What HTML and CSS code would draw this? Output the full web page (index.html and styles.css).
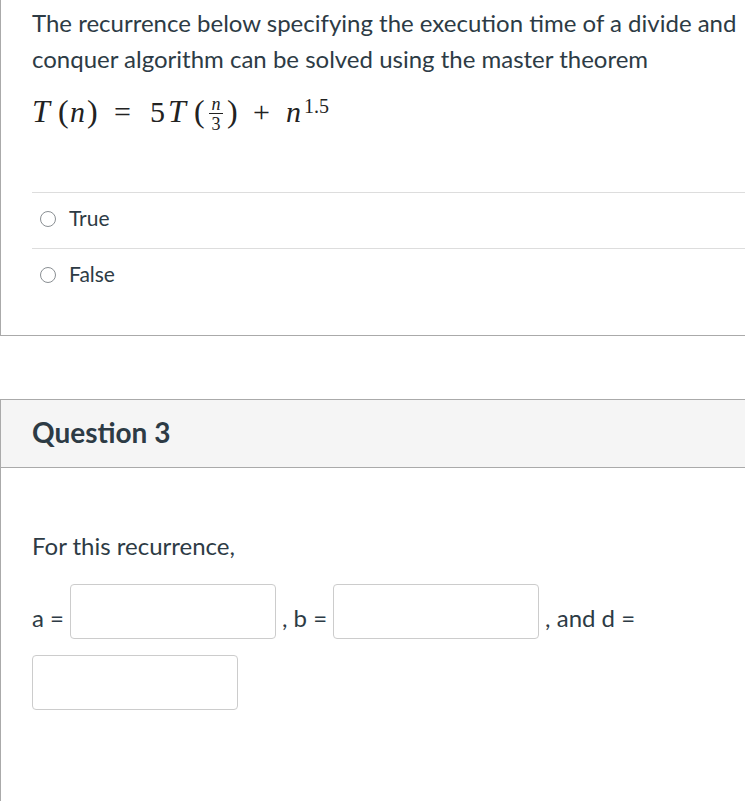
FILE: index.html
```html
<!DOCTYPE html>
<html>
<head>
<meta charset="utf-8">
<link rel="stylesheet" href="styles.css">
</head>
<body>
<div class="page">
  <section class="panel panel-first">
    <div class="question-text">
      <p class="intro">The recurrence below specifying the execution time of a divide and conquer algorithm can be solved using the master theorem</p>
      <div class="formula">
        <span class="g mi big w-t1">T</span><span class="g mo w-lp1">(</span><span class="g mi w-n1">n</span><span class="g mo w-rp1">)</span><span class="g w-eq">=</span><span class="g w-5">5</span><span class="g mi big w-t2">T</span><span class="g mo w-lp2">(</span><span class="frac w-frac"><span class="num">n</span><span class="den">3</span></span><span class="g mo w-rp2">)</span><span class="g w-plus">+</span><span class="g mi w-n2">n</span><span class="sup">1.5</span>
      </div>
    </div>
    <div class="answers">
      <label class="answer"><span class="radio"></span><span class="answer-text">True</span></label>
      <label class="answer"><span class="radio"></span><span class="answer-text">False</span></label>
    </div>
  </section>

  <section class="panel panel-second">
    <header class="q-header"><h2>Question 3</h2></header>
    <div class="q-body">
      <p class="lead">For this recurrence,</p>
      <div class="fill-row">
        <span class="lbl">a =</span>
        <span class="blank"></span>
        <span class="lbl">, b =</span>
        <span class="blank"></span>
        <span class="lbl">, and d =</span>
        <span class="blank"></span>
      </div>
    </div>
  </section>
</div>
</body>
</html>
```

FILE: styles.css
```css
* { box-sizing: border-box; }
html, body { margin: 0; padding: 0; background: #fff; }
body {
  font-family: Lato, "Liberation Sans", sans-serif;
  color: #2d3b45;
  font-size: 24px;
  line-height: 36px;
  width: 745px;
  overflow: hidden;
}
.page { width: 760px; }
.panel {
  border-left: 1px solid #aaaaaa;
  border-bottom: 1px solid #aaaaaa;
}
.panel-first { padding-top: 5px; height: 336px; }
.question-text { padding: 0 0 0 31px; }
.intro { margin: 0; }

.formula {
  margin-top: 16px;
  height: 36px;
  font-family: "Liberation Serif", "Times New Roman", serif;
  font-size: 30px;
  line-height: 36px;
  color: #222222;
  display: flex;
  align-items: baseline;
  white-space: nowrap;
}
.formula .g { display: inline-block; flex: none; }
.formula .mi { font-style: italic; }
.formula .big { font-size: 32px; }
.formula .mo { font-size: 32px; }
.w-t1 { width: 26px; }
.w-lp1 { width: 12px; }
.w-n1 { width: 17px; }
.w-rp1 { width: 27px; }
.w-eq { width: 36px; }
.w-5 { width: 18px; }
.w-t2 { width: 26px; }
.w-lp2 { width: 14px; }
.w-frac { width: 16px; margin-right: 3px; }
.w-rp2 { width: 26px; }
.w-plus { width: 33px; }
.w-n2 { width: 17px; }

.frac {
  display: inline-flex;
  flex-direction: column;
  align-items: center;
  flex: none;
  font-size: 18px;
  line-height: 18px;
  position: relative;
  top: -12px;
}
.frac .num { font-style: italic; border-bottom: 1px solid #222222; padding: 0; width: 14px; text-align: center; }
.frac .den { padding-top: 1px; }
.sup { font-size: 20px; line-height: 20px; position: relative; top: -9px; margin-left: 1px; }

.answers { margin: 63px 0 0 31px; }
.answer {
  display: flex;
  align-items: center;
  height: 56px;
  border-top: 1px solid #dddddd;
  font-size: 21px;
}
.radio {
  width: 16px;
  height: 16px;
  border: 1px solid #8a8f93;
  border-radius: 50%;
  margin: 0 13px 0 8px;
  flex: none;
  position: relative;
  top: -2px;
}
.answer-text { position: relative; top: -3px; }

.panel-second {
  margin-top: 63px;
  border-top: 1px solid #aaaaaa;
  border-bottom: none;
  height: 410px;
}
.q-header {
  background: #f5f5f5;
  border-bottom: 1px solid #aaaaaa;
  height: 68px;
  padding: 0 31px;
  display: flex;
  align-items: center;
}
.q-header h2 {
  margin: 0;
  font-size: 28px;
  font-weight: 700;
  line-height: 1;
  position: relative;
  top: -2px;
}
.q-body { padding: 0 0 0 31px; width: 745px; }
.lead { margin: 60px 0 0 0; }
.fill-row {
  margin-top: 20px;
  display: flex;
  flex-wrap: wrap;
  align-items: center;
  column-gap: 6px;
  row-gap: 16px;
  width: 706px;
}
.blank {
  width: 206px;
  height: 55px;
  border: 1px solid #cccccc;
  border-radius: 4px;
  background: #ffffff;
}
.lbl { position: relative; top: 6px; }
```
